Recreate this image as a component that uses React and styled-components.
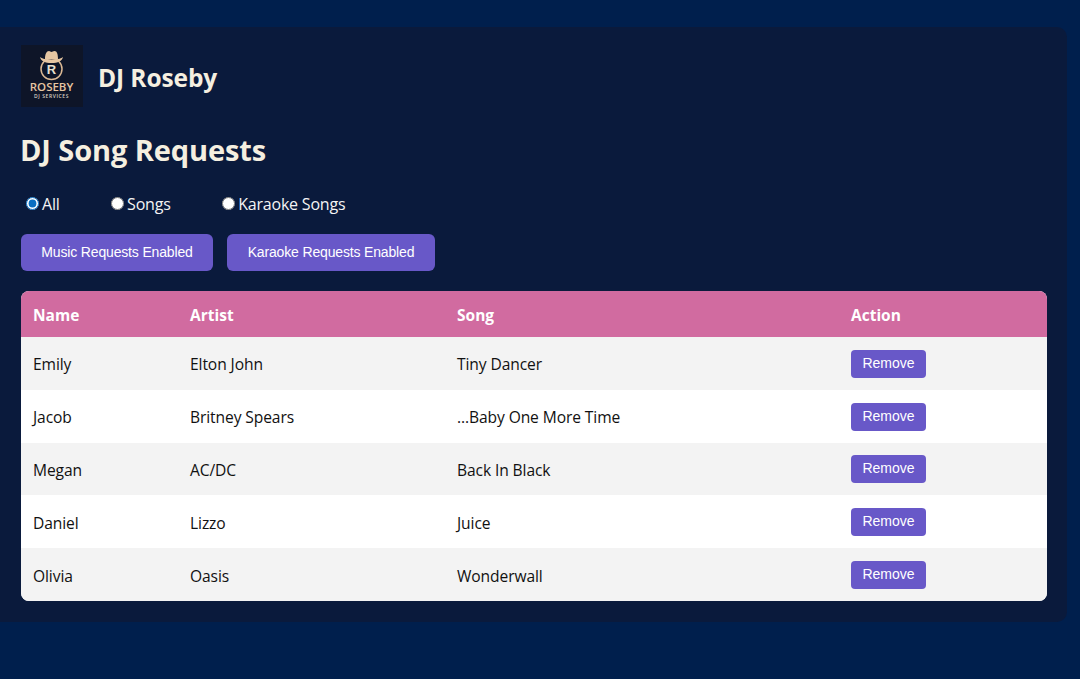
import React from 'react'
import styled, { createGlobalStyle } from 'styled-components'

const GlobalStyle = createGlobalStyle`
	html, body {
		margin: 0;
		padding: 0;
		background: #001f4d;
	}
	body {
		font-family: "Open Sans", "Noto Sans", sans-serif;
	}
`

const Page = styled.div`
	height: 679px;
	padding-top: 27px;
	box-sizing: border-box;
	overflow: hidden;
`

const Card = styled.main`
	width: 1067px;
	height: 595px;
	box-sizing: border-box;
	padding: 18px 20px 0 21px;
	background: #0a1a3c;
	border-radius: 0 10px 10px 0;
	color: #f5efe0;
`

const Brand = styled.header`
	display: flex;
	align-items: center;
	gap: 15px;
	height: 62px;
`

const LogoBox = styled.svg`
	width: 62px;
	height: 62px;
	display: block;
`

const BrandName = styled.div`
	font-size: 24.5px;
	font-weight: 700;
	letter-spacing: -0.1px;
	padding-top: 2px;
`

const Title = styled.h1`
	margin: 22px 0 0 -1px;
	font-size: 29px;
	line-height: 42px;
	font-weight: 700;
	letter-spacing: -0.1px;
`

const Filters = styled.div`
	display: flex;
	gap: 51.5px;
	margin-top: 21px;
	padding-left: 5px;
	height: 24px;
	align-items: center;
`

const Filter = styled.label`
	display: flex;
	align-items: center;
	gap: 3px;
	font-size: 16px;
	letter-spacing: -0.2px;
	color: #f4f4f4;
`

const Radio = styled.input`
	margin: 0;
	width: 13px;
	height: 13px;
	position: relative;
	top: -1px;
	accent-color: #0a6fc2;
`

const Actions = styled.div`
	display: flex;
	gap: 14px;
	margin-top: 18px;
`

const Toggle = styled.button`
	width: ${({ $w }) => $w};
	height: 37px;
	padding: 0 0 2px;
	border: none;
	border-radius: 6px;
	background: #6858c8;
	color: #fff;
	font-family: "Liberation Sans", Arial, sans-serif;
	font-size: 14px;
	letter-spacing: -0.16px;
`

const Table = styled.table`
	width: 1026px;
	margin-top: 20px;
	border-collapse: separate;
	border-spacing: 0;
	table-layout: fixed;
	border-radius: 8px;
	overflow: hidden;
	background: #fff;
	color: #111;
`

const HeadCell = styled.th`
	height: 46px;
	padding: 2px 12px 0;
	box-sizing: border-box;
	background: #d16ba0;
	color: #fff;
	font-size: 15.5px;
	font-weight: 700;
	text-align: left;
	width: ${({ $w }) => $w};
`

const Row = styled.tr`
	background: ${({ $odd }) => ($odd ? '#f3f3f3' : '#fff')};
`

const Cell = styled.td`
	height: 52.8px;
	padding: 2px 12px 0;
	font-size: 15.6px;
	letter-spacing: -0.1px;
	box-sizing: border-box;
`

const ActionCell = styled(Cell)`
	padding: 1px 12px 0;
`

const RemoveButton = styled.button`
	display: block;
	width: 75px;
	height: 28px;
	padding: 0 0 2px;
	border: none;
	border-radius: 4px;
	background: #6858c8;
	color: #fff;
	font-family: "Liberation Sans", Arial, sans-serif;
	font-size: 14px;
`

const requests = [
	{ name: 'Emily', artist: 'Elton John', song: 'Tiny Dancer' },
	{ name: 'Jacob', artist: 'Britney Spears', song: '...Baby One More Time' },
	{ name: 'Megan', artist: 'AC/DC', song: 'Back In Black' },
	{ name: 'Daniel', artist: 'Lizzo', song: 'Juice' },
	{ name: 'Olivia', artist: 'Oasis', song: 'Wonderwall' },
]

const Logo = () => (
	<LogoBox viewBox="0 0 62 62">
		<rect width="62" height="62" fill="#0e1528" />
		<circle cx="30.500" cy="24" r="10.500" fill="none" stroke="#dcb994" strokeWidth="1.500" />
		<path d="M19 12c3 2 6 2.500 11.500 2.500S39 14 42 12c-1 4-5 6-11.500 6S20 16 19 12z" fill="#e6c6a2" />
		<path d="M24 14c0-5 1.500-8 4-8 1 0 1.500 1 2.500 1s1.500-1 3-1c2.500 0 3.500 3 3.500 8z" fill="#e6c6a2" />
		<text x="30.500" y="29" textAnchor="middle" fontFamily="Liberation Sans" fontSize="13" fontWeight="700" fill="#e8e0d0">R</text>
		<text x="30.500" y="46" textAnchor="middle" fontFamily="Open Sans" fontSize="11.500" fontWeight="600" fill="#e6c6a2">ROSEBY</text>
		<text x="30.500" y="52.500" textAnchor="middle" fontFamily="Open Sans" fontSize="5" fontWeight="600" letterSpacing="0.6" fill="#d8d2c4">DJ SERVICES</text>
	</LogoBox>
)

export default function App() {
	return (
		<Page>
			<GlobalStyle />
			<Card>
				<Brand>
					<Logo />
					<BrandName>DJ Roseby</BrandName>
				</Brand>
				<Title>DJ Song Requests</Title>
				<Filters>
					<Filter><Radio type="radio" name="kind" defaultChecked />All</Filter>
					<Filter><Radio type="radio" name="kind" />Songs</Filter>
					<Filter><Radio type="radio" name="kind" />Karaoke Songs</Filter>
				</Filters>
				<Actions>
					<Toggle $w="192px">Music Requests Enabled</Toggle>
					<Toggle $w="208px">Karaoke Requests Enabled</Toggle>
				</Actions>
				<Table>
					<thead>
						<tr>
							<HeadCell $w="157px">Name</HeadCell>
							<HeadCell $w="267px">Artist</HeadCell>
							<HeadCell $w="394px">Song</HeadCell>
							<HeadCell>Action</HeadCell>
						</tr>
					</thead>
					<tbody>
						{requests.map((r, i) => (
							<Row key={r.name} $odd={i % 2 === 0}>
								<Cell>{r.name}</Cell>
								<Cell>{r.artist}</Cell>
								<Cell>{r.song}</Cell>
								<ActionCell><RemoveButton>Remove</RemoveButton></ActionCell>
							</Row>
						))}
					</tbody>
				</Table>
			</Card>
		</Page>
	)
}
